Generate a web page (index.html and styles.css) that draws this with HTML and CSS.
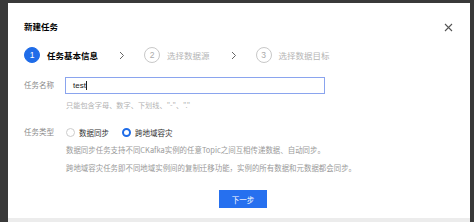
FILE: index.html
```html
<!DOCTYPE html>
<html>
    <head>
        <meta charset="utf-8">
        <title>新建任务</title>
        <link rel="stylesheet" href="styles.css">
    </head>
    <body>
        <div id="dialog">
            <div id="dialog-head">
                <h1>新建任务</h1>
                <span id="close">
                    <svg width="9" height="9" viewBox="0 0 9 9"><path d="M1 1L8 8M8 1L1 8" stroke="#555" stroke-width="1.1" fill="none"/></svg>
                </span>
            </div>
            <div id="steps">
                <div class="step current"><span class="num">1</span><span class="step-name">任务基本信息</span></div>
                <span class="arrow"><svg width="6" height="9" viewBox="0 0 6 9"><path d="M1 1L4.5 4.5L1 8" stroke="#666" stroke-width="1" fill="none"/></svg></span>
                <div class="step"><span class="num">2</span><span class="step-name">选择数据源</span></div>
                <span class="arrow"><svg width="6" height="9" viewBox="0 0 6 9"><path d="M1 1L4.5 4.5L1 8" stroke="#666" stroke-width="1" fill="none"/></svg></span>
                <div class="step"><span class="num">3</span><span class="step-name">选择数据目标</span></div>
            </div>
            <div class="row">
                <label class="label">任务名称</label>
                <div class="field">
                    <div id="name-input">test<span class="caret"></span></div>
                    <p class="hint">只能包含字母、数字、下划线、"-"、"."</p>
                </div>
            </div>
            <div class="row row-type">
                <label class="label">任务类型</label>
                <div class="field">
                    <div class="radios">
                        <span class="radio"><span class="dot"></span>数据同步</span>
                        <span class="radio checked"><span class="dot"></span>跨地域容灾</span>
                    </div>
                    <p class="desc">数据同步任务支持不同CKafka实例的任意Topic之间互相传递数据、自动同步。</p>
                    <p class="desc">跨地域容灾任务即不同地域实例间的复制迁移功能，实例的所有数据和元数据都会同步。</p>
                </div>
            </div>
            <div id="footer">
                <button id="next">下一步</button>
            </div>
        </div>
    </body>
</html>
```

FILE: styles.css
```css
html, body {
    height: 100%;
}
body {
    margin: 0px;
    padding: 3px 4px 0px 8px;
    background-color: #393939;
    font-family: "Noto Sans CJK SC", "Liberation Sans", sans-serif;
    overflow: hidden;
    box-sizing: border-box;
}
#dialog {
    width: 462px;
    height: 225px;
    background-color: #fff;
    border-bottom: 10px solid #ececec;
    padding: 16px 16px 0px 16px;
    box-sizing: border-box;
}
#dialog-head {
    display: flex;
    justify-content: space-between;
    align-items: center;
    height: 12px;
    margin-top: 1px;
}
h1 {
    margin: 0px;
    font-size: 8.5px;
    line-height: 12px;
    font-weight: bold;
    color: #000;
}
#close {
    display: flex;
    margin-right: 1px;
    margin-top: 2px;
}
#steps {
    display: flex;
    align-items: center;
    margin-top: 15px;
    height: 16px;
}
.step {
    display: flex;
    align-items: center;
    color: #b5b5b5;
    font-size: 8.5px;
}
.num {
    display: flex;
    align-items: center;
    justify-content: center;
    width: 16px;
    height: 16px;
    box-sizing: border-box;
    border: 1px solid #c8c8c8;
    border-radius: 50%;
    font-family: "Liberation Sans", sans-serif;
    font-size: 8.5px;
    color: #aaa;
    margin-right: 7px;
}
.current {
    color: #000;
    font-weight: bold;
}
.current .num {
    background-color: #1f6ce8;
    border-color: #1f6ce8;
    color: #fff;
    font-weight: normal;
}
.arrow {
    display: flex;
    margin: 0px 19px 0px 21px;
}
.row {
    display: flex;
    margin-top: 14px;
}
.label {
    width: 41px;
    flex-shrink: 0;
    font-size: 7.5px;
    color: #8a8a8a;
    line-height: 16px;
}
.field {
    display: flex;
    flex-direction: column;
}
#name-input {
    width: 260px;
    height: 17px;
    box-sizing: border-box;
    border: 1px solid #8aa4ee;
    padding: 0px 7px;
    font-family: "Liberation Sans", sans-serif;
    font-size: 8px;
    line-height: 15px;
    color: #222;
    display: flex;
    align-items: center;
}
.caret {
    display: inline-block;
    width: 1px;
    height: 9px;
    background-color: #222;
}
.hint {
    margin: 6px 0px 0px 1px;
    font-size: 7.2px;
    line-height: 10px;
    color: #b3b3b3;
}
.row-type {
    margin-top: 14px;
}
.radios {
    display: flex;
    align-items: center;
    height: 12px;
    margin-top: 2px;
}
.radio {
    display: flex;
    align-items: center;
    font-size: 7.5px;
    color: #333;
    margin-right: 12px;
}
.dot {
    width: 9px;
    height: 9px;
    box-sizing: border-box;
    border: 1px solid #ccc;
    border-radius: 50%;
    margin: 0px 4px 0px 1px;
}
.checked .dot {
    border: 2.5px solid #1f6ce8;
}
.desc {
    margin: 7px 0px 0px 1px;
    font-size: 7.45px;
    line-height: 10px;
    color: #9a9a9a;
}
.desc + .desc {
    margin-top: 8px;
}
#footer {
    display: flex;
    justify-content: center;
    margin-top: 17px;
    padding-left: 8px;
}
#next {
    width: 48px;
    height: 18px;
    border: none;
    background-color: #2670ef;
    color: #fff;
    font-family: "Noto Sans CJK SC", sans-serif;
    font-size: 7.5px;
    padding: 0px;
}
```
